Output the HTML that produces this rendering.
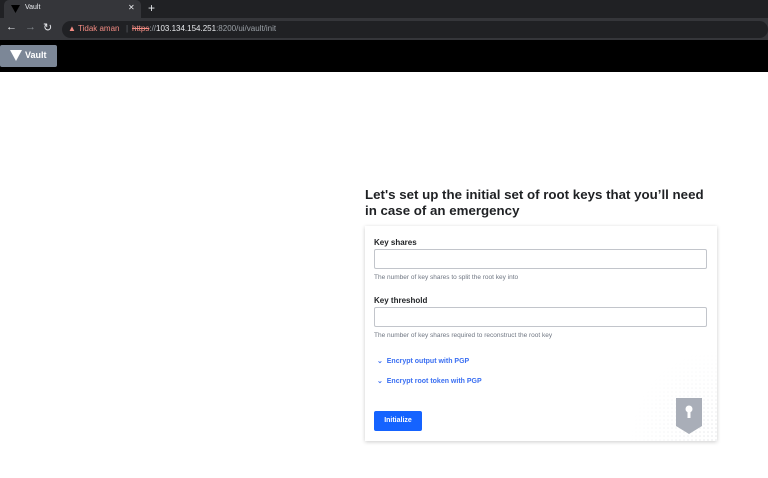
<!DOCTYPE html>
<html><head><style>
*{margin:0;padding:0;box-sizing:border-box}
body{width:768px;height:478px;background:#fff;font-family:"Liberation Sans",sans-serif;position:relative;overflow:hidden}
.abs{position:absolute}
.lbl{position:absolute;left:374px;font-size:8px;font-weight:bold;color:#1f2124}
.inp{position:absolute;left:374px;width:333px;height:20px;border:1px solid #c2c5cb;border-radius:2px}
.help{position:absolute;left:374px;font-size:6.5px;color:#6f7682}
.lnk{position:absolute;left:377px;font-size:7px;color:#3a6ff2;font-weight:bold}
</style></head><body>
<div class="abs" style="left:0;top:0;width:768px;height:18px;background:#202124"></div>
<div class="abs" style="left:4px;top:0;width:137px;height:18px;background:#35363a;border-radius:5px 5px 0 0"></div>
<svg class="abs" style="left:11px;top:5px" width="9" height="8"><path d="M0 0H9L4.5 8Z" fill="#000"/></svg>
<div class="abs" style="left:25px;top:4px;font-size:7px;color:#e8eaed">Vault</div>
<div class="abs" style="left:128px;top:3px;font-size:8px;color:#e8eaed">✕</div>
<div class="abs" style="left:148px;top:1px;font-size:12px;color:#e8eaed">+</div>
<div class="abs" style="left:0;top:18px;width:768px;height:22px;background:#35363a"></div>
<div class="abs" style="left:6px;top:21px;font-size:11px;color:#e8eaed">←</div>
<div class="abs" style="left:25px;top:21px;font-size:11px;color:#80868b">→</div>
<div class="abs" style="left:43px;top:21px;font-size:11px;color:#e8eaed">↻</div>
<div class="abs" style="left:62px;top:21px;width:706px;height:17px;background:#202124;border-radius:9px"></div>
<div class="abs" style="left:68px;top:24px;font-size:8px;color:#f28b82">▲ Tidak aman</div>
<div class="abs" style="left:126px;top:24px;font-size:8px;color:#5f6368">|</div>
<div class="abs" style="left:132px;top:24px;font-size:8px;color:#9aa0a6"><span style="color:#f28b82;text-decoration:line-through">https</span>://<span style="color:#e8eaed">103.134.154.251</span>:8200/ui/vault/init</div>
<div class="abs" style="left:0;top:40px;width:768px;height:32px;background:#000"></div>
<div class="abs" style="left:0;top:45px;width:57px;height:22px;background:#7c8797;border-radius:2px"></div>
<svg class="abs" style="left:10px;top:50px" width="12" height="11"><path d="M0 0H12L6 11Z" fill="#fff"/></svg>
<div class="abs" style="left:25px;top:50px;font-size:9px;font-weight:bold;color:#fff">Vault</div>
<div class="abs" style="left:365px;top:187px;width:400px;font-size:13.3px;font-weight:bold;color:#1f2124;line-height:16px;white-space:nowrap">Let's set up the initial set of root keys that you’ll need<br>in case of an emergency</div>
<div class="abs" style="left:365px;top:226px;width:352px;height:215px;background:#fff;box-shadow:0 1px 4px rgba(0,0,0,.2)"></div>
<svg class="abs" style="left:630px;top:350px" width="87" height="91">
<defs><pattern id="d" width="4" height="4" patternUnits="userSpaceOnUse"><circle cx="2" cy="2" r=".8" fill="#e3e5e8"/></pattern>
<radialGradient id="g" cx="1" cy="1" r="1"><stop offset="0" stop-color="#fff" stop-opacity="0"/><stop offset="1" stop-color="#fff"/></radialGradient></defs>
<rect width="87" height="91" fill="url(#d)"/><rect width="87" height="91" fill="url(#g)"/>
<path d="M46 48H72V76L59 84L46 76Z" fill="#a9aeb8"/>
<circle cx="59" cy="59" r="3.5" fill="#fff"/><rect x="57.5" y="60" width="3" height="8" fill="#fff"/>
</svg>
<div class="lbl" style="top:238px">Key shares</div>
<div class="inp" style="top:249px"></div>
<div class="help" style="top:274px">The number of key shares to split the root key into</div>
<div class="lbl" style="top:296px">Key threshold</div>
<div class="inp" style="top:307px"></div>
<div class="help" style="top:332px">The number of key shares required to reconstruct the root key</div>
<div class="lnk" style="top:357px">⌄&nbsp; Encrypt output with PGP</div>
<div class="lnk" style="top:377px">⌄&nbsp; Encrypt root token with PGP</div>
<div class="abs" style="left:374px;top:411px;width:48px;height:20px;background:#1563ff;border-radius:2px;color:#fff;font-size:7px;font-weight:bold;text-align:center;line-height:20px">Initialize</div>
</body></html>
